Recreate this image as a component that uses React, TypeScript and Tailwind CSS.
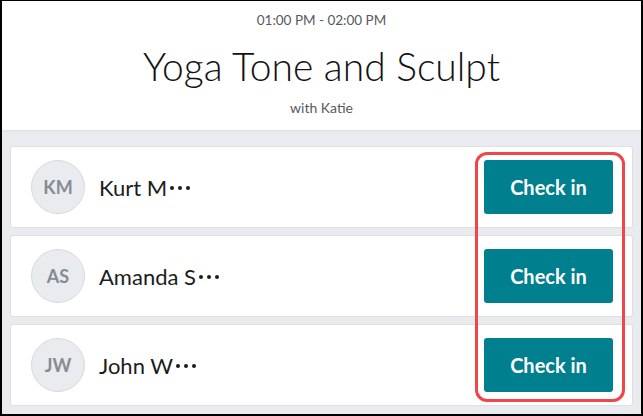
const attendees = [
  { initials: "KM", name: "Kurt M" },
  { initials: "AS", name: "Amanda S" },
  { initials: "JW", name: "John W" },
];

export default function App() {
  return (
    <div
      className="relative flex h-[416px] w-[643px] flex-col overflow-hidden border-b-2 border-l-2 border-r-2 border-t border-black bg-[#e9ebee]"
      style={{ fontFamily: "Lato, 'Open Sans', sans-serif" }}
    >
      {/* class header */}
      <div className="flex h-[129px] shrink-0 flex-col items-center bg-white pt-[11px] shadow-[0_1px_2px_rgba(0,0,0,0.06)]">
        <p className="text-[13.5px] leading-[16px] text-[#555a60]">01:00 PM - 02:00 PM</p>
        <h1 className="mt-[15px] text-[39px] font-light leading-[46px] text-[#111214]">
          Yoga Tone and Sculpt
        </h1>
        <p className="mt-[11px] text-[14px] leading-[16px] text-[#555a60]">with Katie</p>
      </div>

      {/* roster */}
      <div className="flex flex-col gap-[7px] px-[8px] pt-[16px]">
        {attendees.map((a) => (
          <div
            key={a.initials}
            className="flex h-[82px] items-center rounded-[3px] border border-[#dcdfe3] bg-white pl-[20px] pr-[19px]"
          >
            <div className="flex h-[54px] w-[54px] items-center justify-center rounded-full border border-[#d6dade] bg-[#e9ebee] text-[18px] font-bold text-[#868c94]">
              {a.initials}
            </div>
            <span className="ml-[14px] flex items-center text-[22px] text-[#1b1c1e]">
              {a.name}
              <span className="ml-[3px] flex gap-[4px] pt-[2px]">
                <i className="block h-[4px] w-[4px] rounded-full bg-[#1b1c1e]" />
                <i className="block h-[4px] w-[4px] rounded-full bg-[#1b1c1e]" />
                <i className="block h-[4px] w-[4px] rounded-full bg-[#1b1c1e]" />
              </span>
            </span>
            <button
              type="button"
              className="ml-auto h-[54px] w-[129px] rounded-[3px] bg-[#00808f] text-[20px] font-bold text-white"
            >
              Check in
            </button>
          </div>
        ))}
      </div>

      {/* annotation highlight */}
      <div className="pointer-events-none absolute left-[473px] top-[151px] h-[250px] w-[150px] rounded-[12px] border-[3px] border-[#ee4649]" />
    </div>
  );
}
